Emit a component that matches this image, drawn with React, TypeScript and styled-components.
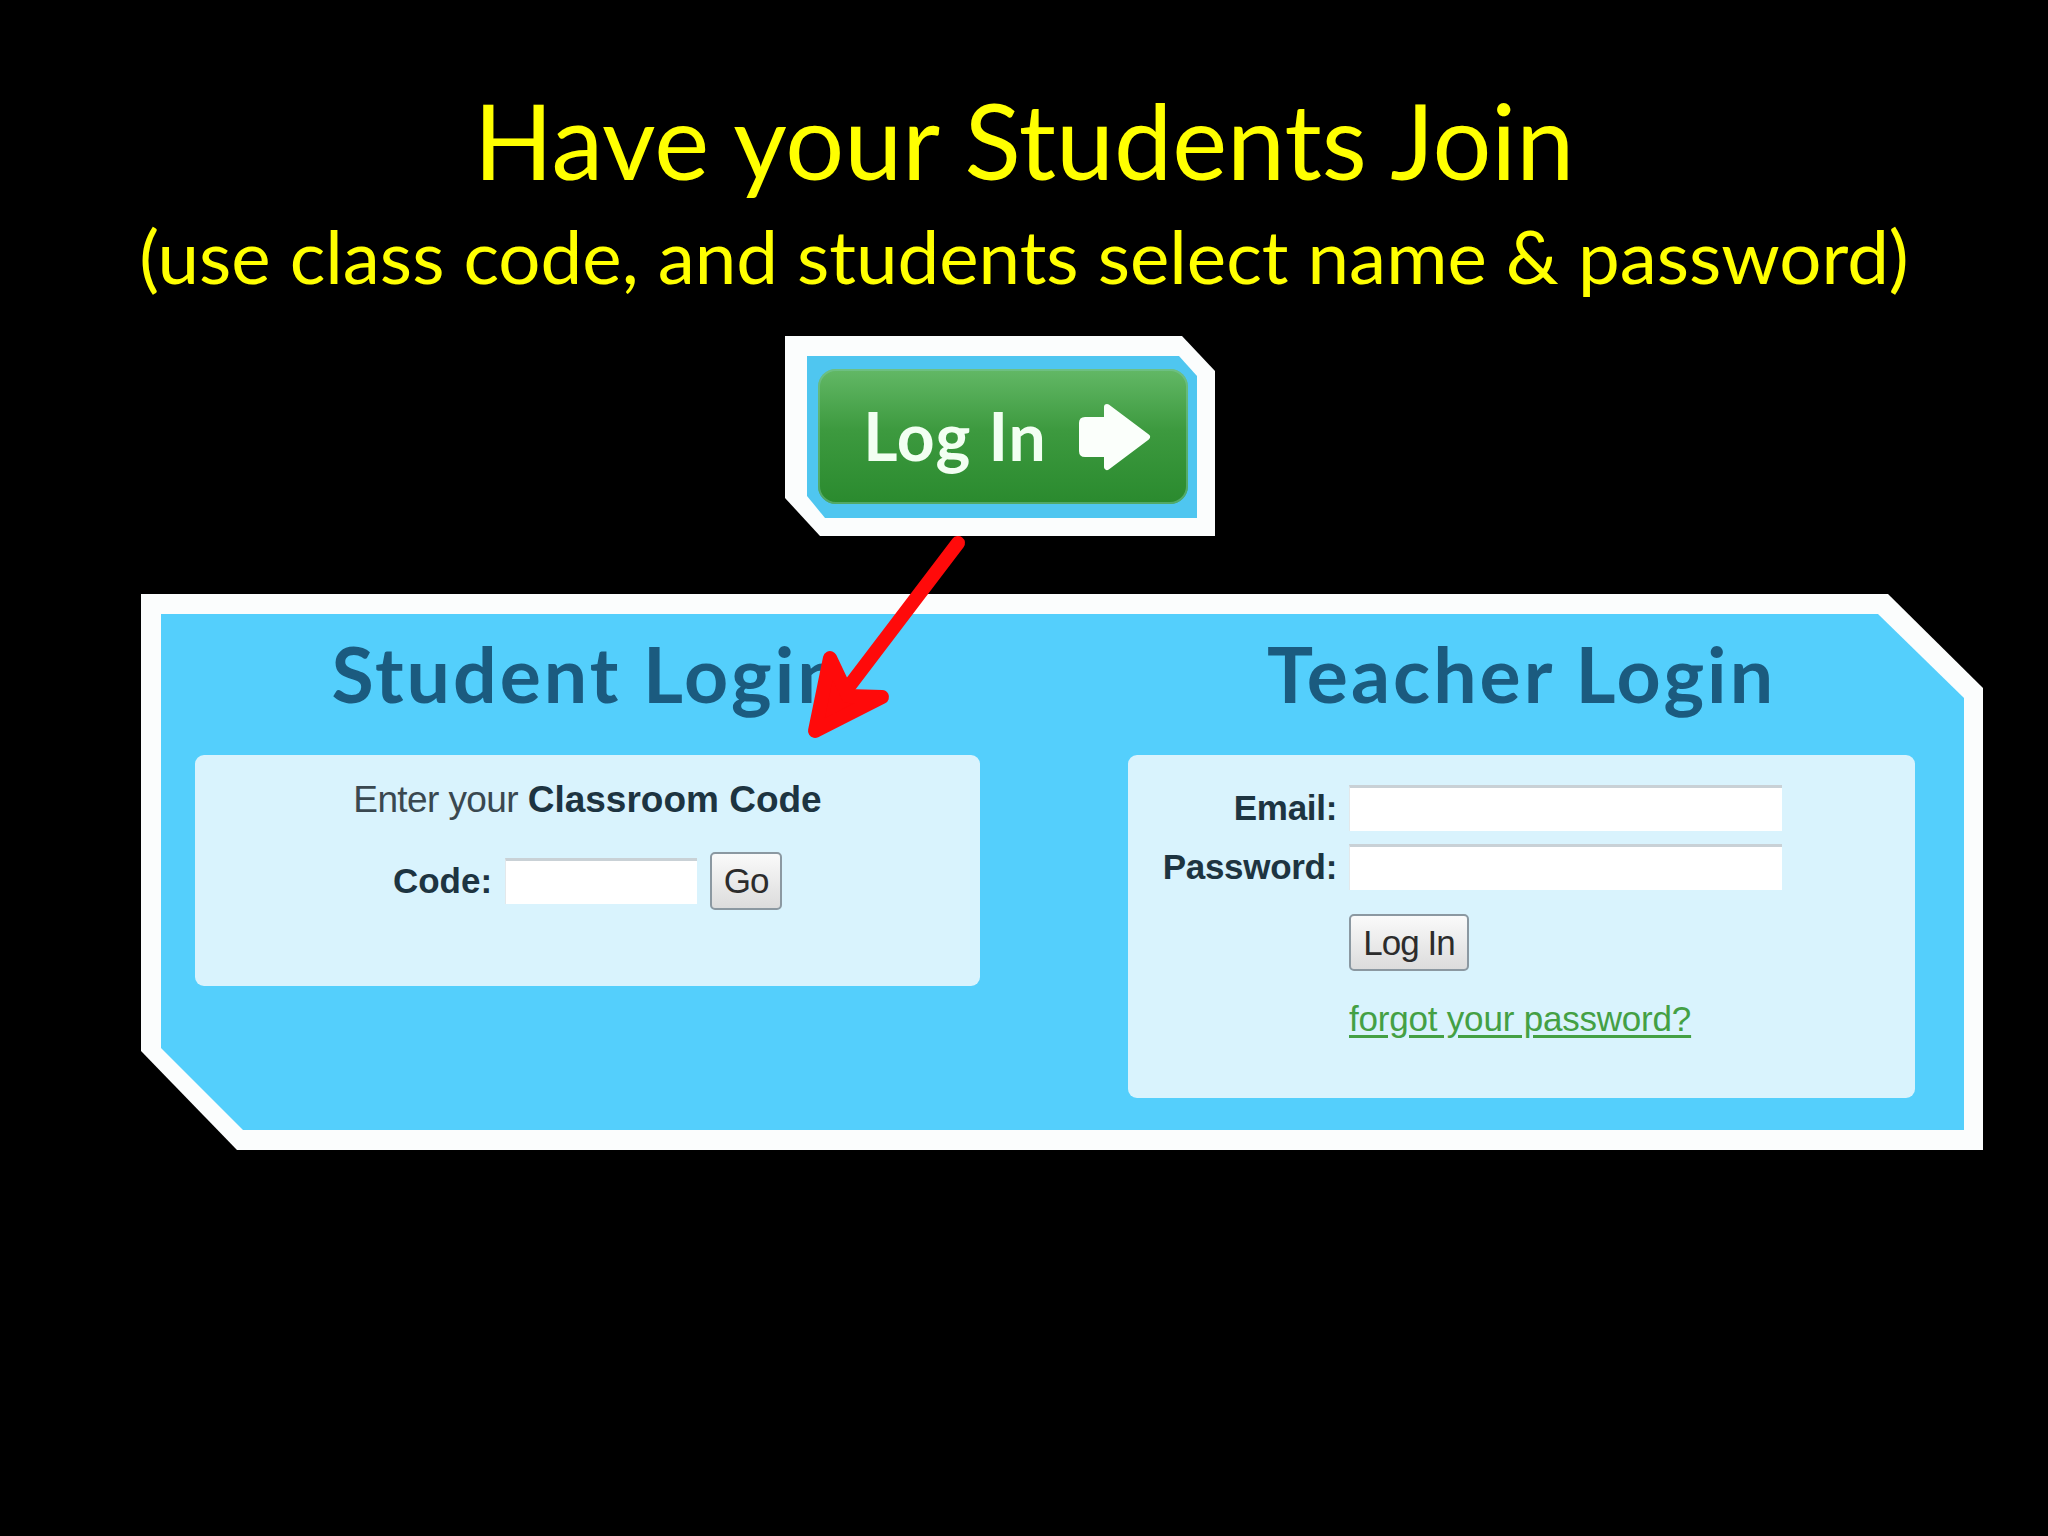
import styled, { createGlobalStyle } from "styled-components";

const GlobalStyle = createGlobalStyle`
  html, body {
    margin: 0;
    padding: 0;
    background: #000;
  }
  body {
    width: 2048px;
    height: 1536px;
    overflow: hidden;
  }
  * {
    box-sizing: border-box;
  }
`;

const Slide = styled.div`
  position: relative;
  width: 2048px;
  height: 1536px;
  background: #000;
  display: flex;
  flex-direction: column;
  align-items: center;
  padding-top: 90px;
`;

const Title = styled.h1`
  margin: 0;
  font-family: Lato, "Open Sans", sans-serif;
  font-weight: 400;
  font-size: 104px;
  line-height: 100px;
  color: #ffff00;
`;

const Subtitle = styled.h2`
  margin: 25px 0 0;
  font-family: Lato, "Open Sans", sans-serif;
  font-weight: 400;
  font-size: 74.5px;
  line-height: 80px;
  color: #ffff00;
`;

const BadgeRow = styled.div`
  width: 100%;
  display: flex;
  justify-content: center;
  padding-right: 48px;
  margin-top: 41px;
`;

const BadgeFrame = styled.div`
  width: 430px;
  height: 200px;
  background: #fbfdfd;
  clip-path: polygon(0 0, 397px 0, 100% 35px, 100% 100%, 35px 100%, 0 162px);
  padding: 20px 18px 18px 22px;
`;

const BadgeInner = styled.div`
  width: 100%;
  height: 100%;
  background: #4fc6f0;
  clip-path: polygon(0 0, 372px 0, 100% 20px, 100% 100%, 18px 100%, 0 140px);
  padding: 13px 9px 14px 11px;
`;

const GreenButton = styled.div`
  height: 100%;
  border-radius: 18px;
  background: linear-gradient(#63b866 0%, #3d9a3f 45%, #2a8a2e 100%);
  box-shadow: inset 0 0 0 2px rgba(120, 200, 160, 0.5);
  display: flex;
  align-items: center;
  justify-content: center;
  gap: 30px;
  padding-left: 8px;
`;

const ButtonLabel = styled.span`
  font-family: Lato, "Open Sans", sans-serif;
  font-weight: 700;
  font-size: 66px;
  line-height: 1;
  letter-spacing: 1px;
  color: #f2fff2;
  margin-top: -2px;
`;

const PanelFrame = styled.div`
  align-self: flex-start;
  margin-left: 141px;
  margin-top: 58px;
  width: 1842px;
  height: 556px;
  background: #fbfdfd;
  clip-path: polygon(0 0, 1747px 0, 100% 94px, 100% 100%, 96px 100%, 0 457px);
  padding: 20px 19px 20px 20px;
`;

const PanelInner = styled.div`
  width: 100%;
  height: 100%;
  background: #54cffc;
  clip-path: polygon(0 0, 1717px 0, 100% 84px, 100% 100%, 82px 100%, 0 434px);
  display: flex;
  align-items: flex-start;
  gap: 148px;
  padding: 0 48px 0 34px;
`;

const Column = styled.div<{ $width: number }>`
  width: ${(p) => p.$width}px;
  display: flex;
  flex-direction: column;
`;

const Heading = styled.h3`
  margin: 0;
  height: 141px;
  padding-top: 19px;
  text-align: center;
  font-family: Lato, "Open Sans", sans-serif;
  font-weight: 700;
  font-size: 77px;
  line-height: 80px;
  letter-spacing: 3px;
  color: #1b5b7f;
`;

const Box = styled.div<{ $height: number }>`
  height: ${(p) => p.$height}px;
  background: #d9f3fd;
  border-radius: 9px;
  font-family: "Liberation Sans", Arial, sans-serif;
  font-size: 35px;
  color: #1d3441;
`;

const StudentBox = styled(Box)`
  display: flex;
  flex-direction: column;
  align-items: center;
  padding-top: 24px;
`;

const Prompt = styled.div`
  font-size: 37px;
  line-height: 42px;
  color: #3a4850;
  letter-spacing: -0.6px;

  b {
    color: #1d3441;
    letter-spacing: 0;
  }
`;

const CodeRow = styled.div`
  display: flex;
  align-items: center;
  gap: 13px;
  margin-top: 31px;
`;

const Label = styled.label`
  font-weight: 700;
  white-space: nowrap;
  color: #1d3441;
`;

const TextInput = styled.div<{ $width: number }>`
  width: ${(p) => p.$width}px;
  height: 46px;
  background: #ffffff;
  border-top: 3px solid #c9d1d6;
  border-left: 1px solid #e3e8eb;
`;

const FormButton = styled.div`
  display: flex;
  align-items: center;
  justify-content: center;
  border: 2px solid #8b98a1;
  border-radius: 5px;
  background: linear-gradient(#fafafa, #dcdcdc);
  color: #2c2c2c;
  font-family: "Liberation Sans", Arial, sans-serif;
  font-size: 35px;
  letter-spacing: -1px;
`;

const TeacherBox = styled(Box)`
  display: grid;
  grid-template-columns: 209px 433px;
  column-gap: 12px;
  align-items: center;
  align-content: start;
  padding-top: 30px;
`;

const FieldLabel = styled(Label)`
  text-align: right;
  letter-spacing: -0.3px;
`;

const FieldCell = styled.div<{ $top?: number }>`
  grid-column: 2;
  margin-top: ${(p) => p.$top ?? 0}px;
`;

const ForgotLink = styled.a`
  color: #44a044;
  text-decoration: underline;
  text-underline-offset: 4px;
  letter-spacing: -0.2px;
  font-size: 35px;
`;

const ArrowOverlay = styled.svg`
  position: absolute;
  left: 0;
  top: 0;
  pointer-events: none;
`;

const ArrowIcon = () => (
  <svg width="74" height="68" viewBox="0 0 74 68">
    <path d="M8 14 H36 V54 H8 Q2 54 2 48 V20 Q2 14 8 14 Z" fill="#fbfffb" />
    <path
      d="M30 4 L70 34 L30 64 Z"
      fill="#fbfffb"
      stroke="#fbfffb"
      strokeWidth="6"
      strokeLinejoin="round"
    />
  </svg>
);

export default function App() {
  return (
    <>
      <GlobalStyle />
      <Slide>
        <Title>Have your Students Join</Title>
        <Subtitle>(use class code, and students select name &amp; password)</Subtitle>

        <BadgeRow>
          <BadgeFrame>
            <BadgeInner>
              <GreenButton>
                <ButtonLabel>Log In</ButtonLabel>
                <ArrowIcon />
              </GreenButton>
            </BadgeInner>
          </BadgeFrame>
        </BadgeRow>

        <PanelFrame>
          <PanelInner>
            <Column $width={785}>
              <Heading>Student Login</Heading>
              <StudentBox $height={231}>
                <Prompt>
                  Enter your <b>Classroom Code</b>
                </Prompt>
                <CodeRow>
                  <Label>Code:</Label>
                  <TextInput $width={192} />
                  <FormButton style={{ width: 72, height: 58 }}>Go</FormButton>
                </CodeRow>
              </StudentBox>
            </Column>

            <Column $width={787}>
              <Heading>Teacher Login</Heading>
              <TeacherBox $height={343}>
                <FieldLabel>Email:</FieldLabel>
                <TextInput $width={433} />
                <FieldLabel style={{ marginTop: 13 }}>Password:</FieldLabel>
                <FieldCell $top={13}>
                  <TextInput $width={433} />
                </FieldCell>
                <FieldCell $top={24}>
                  <FormButton style={{ width: 120, height: 57 }}>Log In</FormButton>
                </FieldCell>
                <FieldCell $top={28}>
                  <ForgotLink href="#">forgot your password?</ForgotLink>
                </FieldCell>
              </TeacherBox>
            </Column>
          </PanelInner>
        </PanelFrame>

        <ArrowOverlay width="2048" height="1536" viewBox="0 0 2048 1536">
          <line
            x1="958"
            y1="543"
            x2="828"
            y2="714"
            stroke="#ff0a0a"
            strokeWidth="14"
            strokeLinecap="round"
          />
          <path
            d="M830 658 L815 731 L882 697 L848 696 Z"
            fill="#ff0a0a"
            stroke="#ff0a0a"
            strokeWidth="14"
            strokeLinejoin="round"
            strokeLinecap="round"
          />
        </ArrowOverlay>
      </Slide>
    </>
  );
}
